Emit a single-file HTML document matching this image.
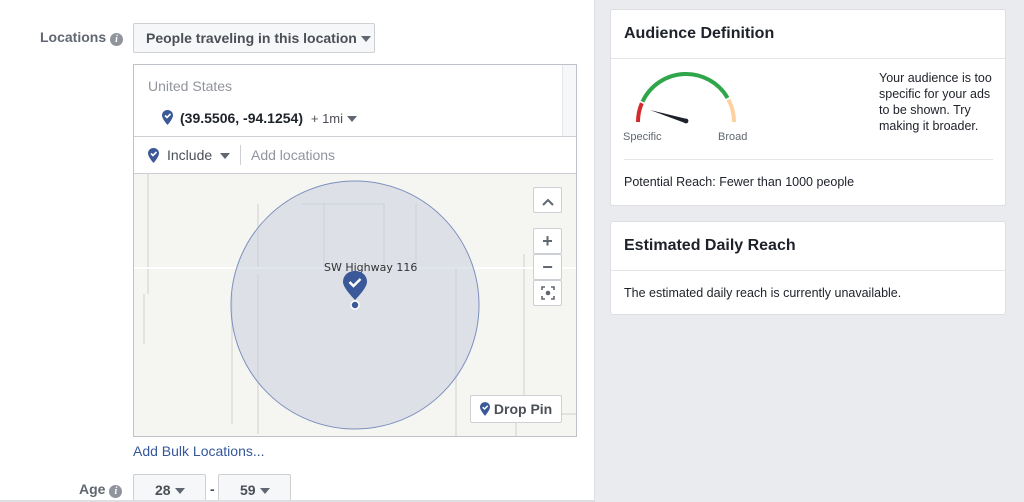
<!DOCTYPE html>
<html><head><meta charset="utf-8"><style>
*{box-sizing:border-box;margin:0;padding:0}
html,body{width:1024px;height:502px;overflow:hidden}
body{font-family:"Liberation Sans",Helvetica,Arial,sans-serif;background:#fff;position:relative}
.abs{position:absolute}
.right{left:594px;top:0;width:430px;height:502px;background:#e9ebee;border-left:1px solid #dddfe2}
.card{background:#fff;border:1px solid #dddfe2;border-radius:3px;left:610px;width:396px}
.btn{border:1px solid #ced0d4;border-radius:2px;background:#f6f7f9;color:#4b4f56;font-weight:bold;font-size:14px}
.caret{display:inline-block;width:0;height:0;border-left:5px solid transparent;border-right:5px solid transparent;border-top:6px solid #606770;vertical-align:middle;margin-left:4px}
.ctrl{left:533px;width:29px;height:26px;background:#fff;border:1px solid #ccd0d5;border-radius:2px;color:#606770;text-align:center;font-size:18px;line-height:24px;font-weight:bold}
</style></head><body>
<div class="abs" style="left:40px;top:29px;font-size:14px;font-weight:bold;color:#606770">Locations <span style="display:inline-block;width:13px;height:13px;border-radius:50%;background:#90949c;color:#fff;font-size:10px;text-align:center;line-height:13px;font-style:italic;font-family:'Liberation Serif',serif">i</span></div>
<div class="abs btn" style="left:133px;top:23px;width:242px;height:30px;line-height:28px;padding-left:12px">People traveling in this location<span class="caret"></span></div>

<div class="abs" style="left:133px;top:64px;width:444px;height:373px;border:1px solid #bec3c9;background:#fff"></div>
<div class="abs" style="left:562px;top:65px;width:14px;height:71px;background:#f6f7f9;border-left:1px solid #e5e6e9"></div>
<div class="abs" style="left:148px;top:78px;font-size:14px;color:#90949c">United States</div>
<svg class="abs" style="left:162px;top:110px" width="11" height="15" viewBox="0 0 11 15"><path d="M5.5 0C2.5 0 0 2.3 0 5.3 0 9 5.5 15 5.5 15S11 9 11 5.3C11 2.3 8.5 0 5.5 0z" fill="#3b5998"/><path d="M3 5.5l2 2 3.5-3.5" stroke="#fff" stroke-width="1.6" fill="none"/></svg>
<div class="abs" style="left:180px;top:110px;font-size:14px;color:#1d2129"><b>(39.5506, -94.1254)</b> <span style="color:#4b4f56;font-size:13px;margin-left:4px">+ 1mi</span><span class="caret"></span></div>
<div class="abs" style="left:134px;top:136px;width:442px;height:1px;background:#ccd0d5"></div>
<svg class="abs" style="left:148px;top:148px" width="11" height="15" viewBox="0 0 11 15"><path d="M5.5 0C2.5 0 0 2.3 0 5.3 0 9 5.5 15 5.5 15S11 9 11 5.3C11 2.3 8.5 0 5.5 0z" fill="#3b5998"/><path d="M3 5.5l2 2 3.5-3.5" stroke="#fff" stroke-width="1.6" fill="none"/></svg>
<div class="abs" style="left:167px;top:147px;font-size:14px;color:#4b4f56">Include<span class="caret" style="margin-left:8px"></span></div>
<div class="abs" style="left:240px;top:145px;width:1px;height:20px;background:#ccd0d5"></div>
<div class="abs" style="left:251px;top:147px;font-size:14px;color:#90949c">Add locations</div>
<div class="abs" style="left:134px;top:173px;width:442px;height:1px;background:#ccd0d5"></div>

<svg class="abs" style="left:134px;top:174px" width="442" height="262" viewBox="0 0 442 262">
<rect width="442" height="262" fill="#f5f5f2"/>
<g stroke="#e2e2df" stroke-width="2" fill="none">
<path d="M0 94H442"/><path d="M14 0V120 M10 120V170"/><path d="M98 120V250"/><path d="M124 30V94 M124 100V260"/><path d="M168 30H250V94"/><path d="M190 28V94"/><path d="M322 94V262"/><path d="M282 30V94"/><path d="M382 240V262 M382 240H442"/><path d="M390 80V240"/>
</g>
<path d="M0 94H442" stroke="#fff" stroke-width="2"/>
<circle cx="221" cy="131" r="124" fill="#c9d0de" fill-opacity="0.55" stroke="#7d8fbd" stroke-width="1"/>
<text x="190" y="97" font-family="DejaVu Sans,sans-serif" font-size="11" fill="#333">SW Highway 116</text>
<circle cx="221" cy="131" r="4" fill="#3b5998" stroke="#fff" stroke-width="1.5"/>
<path d="M221 126C221 126 209 114 209 108 209 101 214.5 97 221 97 227.5 97 233 101 233 108 233 114 221 126 221 126z" fill="#3b5998"/>
<path d="M215.5 108l4 4 7-7" stroke="#fff" stroke-width="2.5" fill="none"/>
</svg>
<div class="abs ctrl" style="top:187px"><svg width="12" height="8" viewBox="0 0 12 8" style="margin-top:8px"><path d="M1 7l5-5 5 5" stroke="#606770" stroke-width="2" fill="none"/></svg></div>
<div class="abs ctrl" style="top:228px">+</div>
<div class="abs ctrl" style="top:254px">−</div>
<div class="abs ctrl" style="top:280px"><svg width="14" height="14" viewBox="0 0 14 14" style="margin-top:5px"><path d="M1 4V1h3M10 1h3v3M13 10v3h-3M4 13H1v-3" stroke="#606770" stroke-width="1.6" fill="none"/><circle cx="7" cy="7" r="2.3" fill="#606770"/></svg></div>
<div class="abs btn" style="left:470px;top:395px;width:92px;height:28px;background:#fff;color:#4b4f56;font-size:14px;line-height:26px;padding-left:9px">
<svg width="10" height="14" viewBox="0 0 11 15" style="vertical-align:-2px"><path d="M5.5 0C2.5 0 0 2.3 0 5.3 0 9 5.5 15 5.5 15S11 9 11 5.3C11 2.3 8.5 0 5.5 0z" fill="#3b5998"/><path d="M3 5.5l2 2 3.5-3.5" stroke="#fff" stroke-width="1.6" fill="none"/></svg> Drop Pin</div>
<div class="abs" style="left:133px;top:443px;font-size:14px;color:#365899">Add Bulk Locations...</div>

<div class="abs" style="left:79px;top:481px;font-size:14px;font-weight:bold;color:#606770">Age <span style="display:inline-block;width:13px;height:13px;border-radius:50%;background:#90949c;color:#fff;font-size:10px;text-align:center;line-height:13px;font-style:italic;font-family:'Liberation Serif',serif">i</span></div>
<div class="abs btn" style="left:133px;top:474px;width:73px;height:28px;line-height:30px;padding-left:21px;border-bottom:none">28<span class="caret"></span></div>
<div class="abs" style="left:210px;top:481px;font-size:14px;color:#4b4f56;font-weight:bold">-</div>
<div class="abs btn" style="left:218px;top:474px;width:73px;height:28px;line-height:30px;padding-left:21px;border-bottom:none">59<span class="caret"></span></div>
<div class="abs" style="left:0;top:500px;width:594px;height:2px;background:#dddfe2"></div>

<div class="abs right"></div>
<div class="abs card" style="top:9px;height:197px">
<div style="height:49px;border-bottom:1px solid #e5e5e5;padding:15px 0 0 13px;font-size:16px;font-weight:bold;color:#1d2129">Audience Definition</div>
<svg class="abs" style="left:12px;top:60px" width="140" height="76" viewBox="0 0 140 76">
<path d="M15 52A48 48 0 0 1 18.8 33.2" stroke="#d32b2b" stroke-width="4" fill="none"/>
<path d="M19.5 31.7A48 48 0 0 1 104.6 28" stroke="#30a64a" stroke-width="4" fill="none"/>
<path d="M105.4 29.5A48 48 0 0 1 111 52" stroke="#ffd0a0" stroke-width="4" fill="none"/>
<path d="M27 40L64 49 62 53z" fill="#1d2129"/><circle cx="63" cy="51" r="2.4" fill="#1d2129"/>
<text x="0" y="70" font-family="Liberation Sans,sans-serif" font-size="11" fill="#606770">Specific</text>
<text x="95" y="70" font-family="Liberation Sans,sans-serif" font-size="11" fill="#606770">Broad</text>
</svg>
<div class="abs" style="left:268px;top:60px;width:122px;font-size:12.5px;line-height:16px;color:#1d2129">Your audience is too specific for your ads to be shown. Try making it broader.</div>
<div class="abs" style="left:13px;top:149px;width:369px;height:1px;background:#e5e5e5"></div>
<div class="abs" style="left:13px;top:165px;font-size:12.5px;color:#1d2129">Potential Reach: Fewer than 1000 people</div>
</div>
<div class="abs card" style="top:221px;height:94px">
<div style="height:49px;border-bottom:1px solid #e5e5e5;padding:15px 0 0 13px;font-size:16px;font-weight:bold;color:#1d2129">Estimated Daily Reach</div>
<div style="padding:15px 0 0 13px;font-size:12.5px;color:#1d2129">The estimated daily reach is currently unavailable.</div>
</div>
</body></html>
